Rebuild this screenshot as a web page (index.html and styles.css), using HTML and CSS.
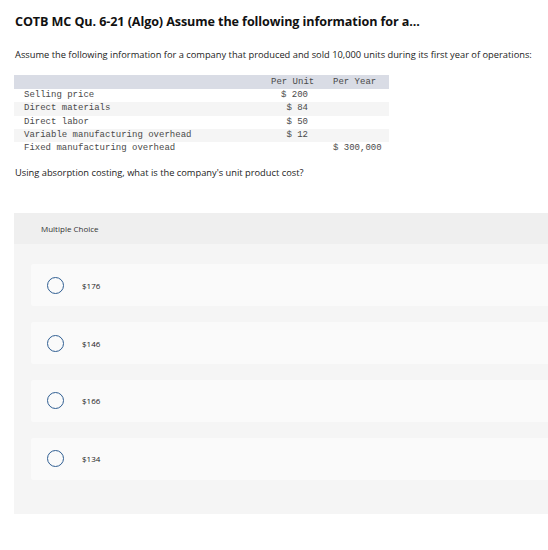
FILE: index.html
```html
<!DOCTYPE html>
<html>
<head>
<meta charset="utf-8">
<link rel="stylesheet" href="styles.css">
</head>
<body>
<div class="page">
  <h1 class="title">COTB MC Qu. 6-21 (Algo) Assume the following information for a...</h1>
  <p class="intro">Assume the following information for a company that produced and sold 10,000 units during its first year of operations:</p>
  <table class="data">
    <colgroup><col class="c-lab"><col class="c-unit"><col class="c-year"></colgroup>
    <thead>
      <tr><th class="lab"></th><th class="unit">Per Unit</th><th class="year">Per Year</th></tr>
    </thead>
    <tbody>
      <tr><td class="lab">Selling price</td><td class="unit">$ 200</td><td class="year"></td></tr>
      <tr class="alt"><td class="lab">Direct materials</td><td class="unit">$ 84</td><td class="year"></td></tr>
      <tr><td class="lab">Direct labor</td><td class="unit">$ 50</td><td class="year"></td></tr>
      <tr class="alt"><td class="lab">Variable manufacturing overhead</td><td class="unit">$ 12</td><td class="year"></td></tr>
      <tr><td class="lab">Fixed manufacturing overhead</td><td class="unit"></td><td class="year">$ 300,000</td></tr>
    </tbody>
  </table>
  <p class="question">Using absorption costing, what is the company's unit product cost?</p>
  <section class="mc">
    <div class="mc-head">Multiple Choice</div>
    <div class="mc-body">
      <div class="opt"><span class="radio"></span><span class="opt-text">$176</span></div>
      <div class="opt"><span class="radio"></span><span class="opt-text">$146</span></div>
      <div class="opt"><span class="radio"></span><span class="opt-text">$166</span></div>
      <div class="opt"><span class="radio"></span><span class="opt-text">$134</span></div>
    </div>
  </section>
</div>
</body>
</html>
```
FILE: styles.css
```css
html, body {
  margin: 0;
  padding: 0;
  background: #fff;
  overflow: hidden;
}
body {
  font-family: "Open Sans", "Liberation Sans", sans-serif;
  color: #222;
}
.page {
  padding: 14px 0 0 14px;
}
.title {
  margin: 0 0 0 1px;
  font-size: 12.6px;
  font-weight: 700;
  line-height: 16px;
  color: #111;
  letter-spacing: -0.1px;
}
.intro {
  margin: 18px 0 0 1px;
  font-size: 9.3px;
  line-height: 14px;
  color: #222;
}
.data {
  margin-top: 13px;
  border-collapse: collapse;
  table-layout: fixed;
  font-family: "Liberation Mono", "DejaVu Sans Mono", monospace;
  font-size: 9px;
  color: #4a4a4a;
  width: 375px;
}
.c-lab { width: 257px; }
.c-unit { width: 62px; }
.c-year { width: 56px; }
.data th, .data td {
  padding: 0;
  height: 13.3px;
  line-height: 13px;
  font-weight: 400;
  white-space: nowrap;
}
.data thead tr {
  background: #d9dce5;
}
.data thead th {
  height: 14px;
}
.data tr.alt {
  background: #f5f5f5;
}
.data .lab {
  text-align: left;
  padding-left: 10px;
}
.data th.unit {
  text-align: left;
}
.data td.unit {
  text-align: right;
  padding-right: 25px;
}
.data .year {
  text-align: left;
}
.question {
  margin: 11px 0 0 1px;
  font-size: 9.3px;
  line-height: 14px;
  color: #222;
}
.mc {
  margin-top: 33px;
  background: #f5f5f5;
}
.mc-head {
  background: #efefef;
  height: 31px;
  padding-left: 27px;
  display: flex;
  align-items: center;
  font-size: 8px;
  color: #333;
}
.mc-body {
  padding: 20px 0 34px 17px;
  display: flex;
  flex-direction: column;
  gap: 15.7px;
}
.opt {
  background: #fafafa;
  height: 42px;
  border-radius: 2px 0 0 2px;
  display: flex;
  align-items: center;
  padding-left: 16px;
}
.radio {
  width: 15px;
  height: 15px;
  border: 1.5px solid #2f5e92;
  border-radius: 50%;
  flex: none;
}
.opt-text {
  margin-left: 18px;
  font-size: 8px;
  color: #222;
}
```
